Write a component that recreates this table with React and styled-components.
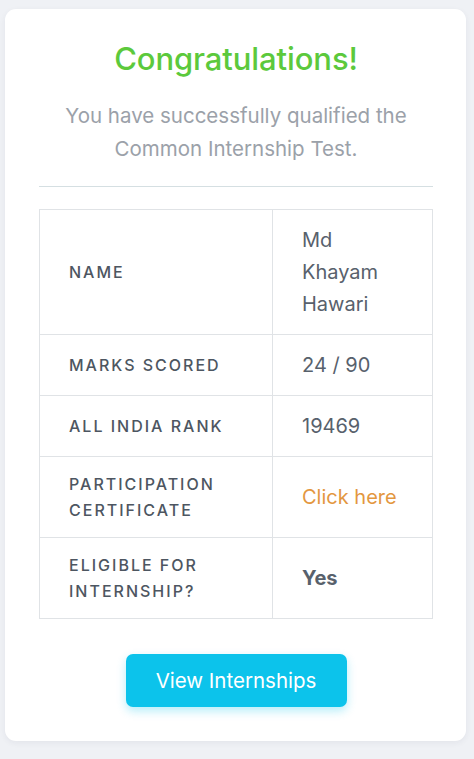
import React from "react";
import styled, { createGlobalStyle } from "styled-components";

const GlobalStyle = createGlobalStyle`
  body {
    margin: 0;
    background: #eff1f5;
    font-family: "Inter", "Noto Sans", sans-serif;
  }
`;

const Page = styled.div`
  padding: 9px 8px 17px 5px;
`;

const Card = styled.div`
  background: #ffffff;
  border-radius: 11px;
  padding: 32px 33px 34px 34px;
  box-shadow: 0 2px 6px rgba(30, 40, 60, 0.06);
  display: flex;
  flex-direction: column;
  align-items: center;
`;

const Title = styled.h1`
  margin: 0;
  font-size: 31px;
  line-height: 36px;
  font-weight: 500;
  color: #5cc93c;
  letter-spacing: -0.1px;
`;

const Subtitle = styled.p`
  margin: 22px 0 0;
  font-size: 20.5px;
  line-height: 33px;
  color: #9ba1a9;
  text-align: center;
  width: 380px;
`;

const Divider = styled.hr`
  width: 100%;
  border: none;
  border-top: 1.5px solid #d5dfe2;
  margin: 21px 0 22px;
`;

const Table = styled.table`
  width: 100%;
  border-collapse: collapse;
  table-layout: fixed;
  border: 1.5px solid #e0e3e6;
`;

const Row = styled.tr`
  border-bottom: 1.5px solid #e0e3e6;
`;

const Label = styled.td`
  box-sizing: border-box;
  width: 233px;
  padding: 14px 10px 14px 29px;
  border-right: 1.5px solid #e0e3e6;
  font-size: 16px;
  line-height: 26px;
  letter-spacing: 2px;
  text-transform: uppercase;
  color: #4d5661;
  font-weight: 500;
`;

const Value = styled.td`
  padding: 14px 10px 14px 29px;
  font-size: 20px;
  line-height: 32px;
  color: ${(p) => (p.$link ? "#e3973f" : "#58616c")};
  font-weight: ${(p) => (p.$bold ? 700 : 400)};
`;

const NameLine = styled.div`
  display: block;
`;

const Button = styled.button`
  margin-top: 35px;
  width: 221px;
  height: 53px;
  border: none;
  border-radius: 7px;
  background: #0cc3eb;
  color: #ffffff;
  font-family: inherit;
  font-size: 20.5px;
  cursor: pointer;
  box-shadow: 0 4px 10px rgba(12, 195, 235, 0.3);
`;

const rows = [
  { label: "Name", value: "Md Khayam Hawari", narrow: true },
  { label: "Marks Scored", value: "24 / 90" },
  { label: "All India Rank", value: "19469" },
  { label: "Participation Certificate", value: "Click here", link: true },
  { label: "Eligible for Internship?", value: "Yes", bold: true },
];

export default function App() {
  return (
    <Page>
      <GlobalStyle />
      <Card>
        <Title>Congratulations!</Title>
        <Subtitle>
          You have successfully qualified the Common Internship Test.
        </Subtitle>
        <Divider />
        <Table>
          <tbody>
            {rows.map((r) => (
              <Row key={r.label}>
                <Label>{r.label}</Label>
                <Value $link={r.link} $bold={r.bold}>
                  {r.narrow
                    ? r.value.split(" ").map((w) => <NameLine key={w}>{w}</NameLine>)
                    : r.value}
                </Value>
              </Row>
            ))}
          </tbody>
        </Table>
        <Button>View Internships</Button>
      </Card>
    </Page>
  );
}
